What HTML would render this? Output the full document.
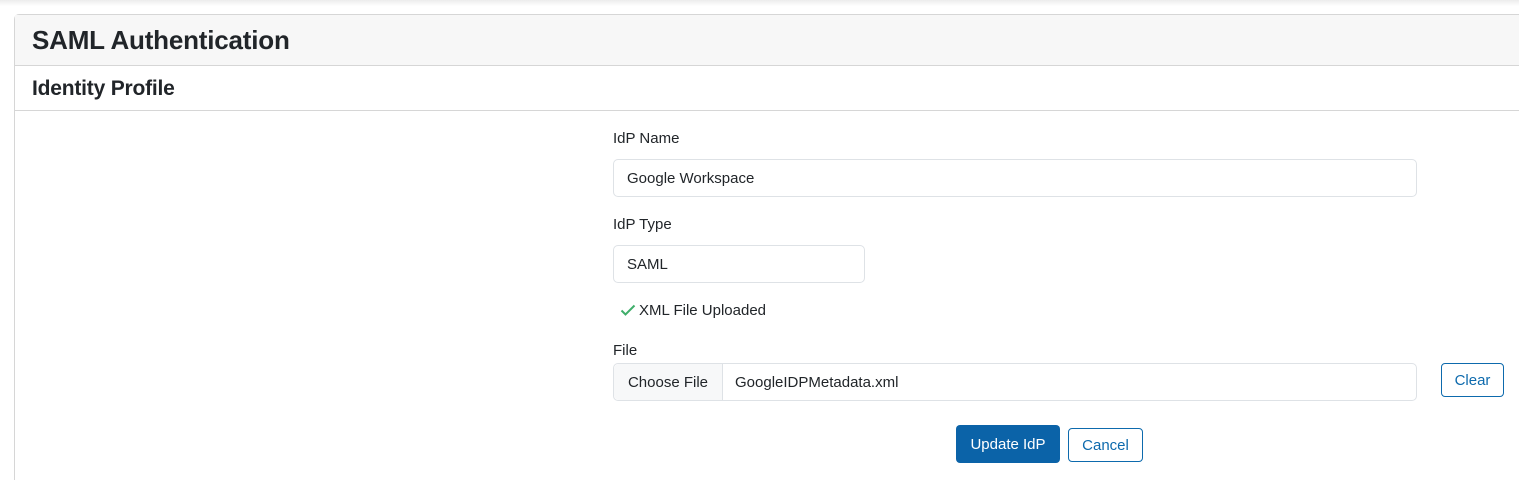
<!DOCTYPE html>
<html><head><style>
*{box-sizing:border-box;margin:0;padding:0}
html,body{width:1519px;height:480px;overflow:hidden}
body{background:#fff;font-family:"Liberation Sans",sans-serif;color:#212529;position:relative}
.shadow{position:absolute;left:0;top:0;width:1519px;height:6px;background:linear-gradient(#ececec,#fff)}
.card{position:absolute;left:14px;top:14px;width:1505px;height:466px;border:1px solid #d6d6d6;border-right:none;border-bottom:none;border-radius:5px 0 0 0}
.h1{height:51px;background:#f7f7f7;border-bottom:1px solid #d6d6d6;padding-left:17px;font-size:26px;font-weight:bold;line-height:51px;color:#212529;letter-spacing:-0.2px}
.h2{height:45px;border-bottom:1px solid #d6d6d6;padding-left:17px;font-size:21px;font-weight:bold;line-height:45px;letter-spacing:-0.2px}
.abs{position:absolute}
.lbl{font-size:15px;color:#212529}
.inp{border:1px solid #dee2e6;border-radius:5px;height:38px;font-size:15px;line-height:37px;padding-left:13px;background:#fff}
.btn{border-radius:4px;font-size:15px;text-align:center}
</style></head><body>
<div class="shadow"></div>
<div class="card"><div class="h1">SAML Authentication</div><div class="h2">Identity Profile</div></div>
<div class="abs lbl" style="left:613px;top:130px">IdP Name</div>
<div class="abs inp" style="left:613px;top:159px;width:804px">Google Workspace</div>
<div class="abs lbl" style="left:613px;top:216px">IdP Type</div>
<div class="abs inp" style="left:613px;top:245px;width:252px">SAML</div>
<svg class="abs" style="left:620px;top:304px" width="16" height="13" viewBox="0 0 16 13"><path d="M1.5 6.5 L5.5 10.5 L14.5 1.5" fill="none" stroke="#3fae6a" stroke-width="2"/></svg>
<div class="abs lbl" style="left:639px;top:302px">XML File Uploaded</div>
<div class="abs lbl" style="left:613px;top:342px">File</div>
<div class="abs inp" style="left:613px;top:363px;width:804px;padding-left:0;display:flex">
<div style="background:#f7f8f9;border-right:1px solid #dee2e6;width:109px;text-align:center;border-radius:5px 0 0 5px">Choose File</div>
<div style="padding-left:12px">GoogleIDPMetadata.xml</div></div>
<div class="abs btn" style="left:1441px;top:363px;width:63px;height:34px;border:1px solid #0d6aad;color:#0d6aad;line-height:34px">Clear</div>
<div class="abs btn" style="left:956px;top:425px;width:104px;height:38px;background:#0b63a8;color:#fff;line-height:39px">Update IdP</div>
<div class="abs btn" style="left:1068px;top:428px;width:75px;height:34px;border:1px solid #0d6aad;color:#0d6aad;line-height:34px">Cancel</div>
</body></html>
